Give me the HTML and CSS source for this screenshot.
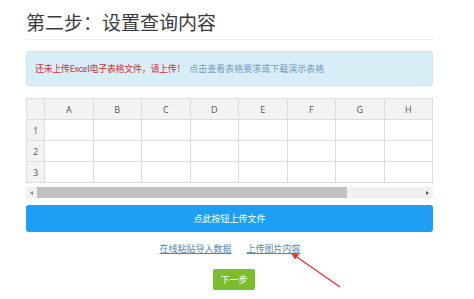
FILE: index.html
```html
<!DOCTYPE html>
<html lang="zh">
<head>
<meta charset="utf-8">
<link rel="stylesheet" href="styles.css">
</head>
<body>
<div class="page">
  <h1 class="title">第二步：设置查询内容</h1>
  <div class="alert">
    <span class="alert-warn">还未上传Excel电子表格文件，请上传！</span>
    <a class="alert-link">点击查看表格要求或下载演示表格</a>
  </div>
  <div class="sheet">
    <div class="grid">
      <div class="cell corner"></div>
      <div class="cell head">A</div><div class="cell head">B</div><div class="cell head">C</div><div class="cell head">D</div>
      <div class="cell head">E</div><div class="cell head">F</div><div class="cell head">G</div><div class="cell head">H</div>
      <div class="cell rowhead">1</div>
      <div class="cell"></div><div class="cell"></div><div class="cell"></div><div class="cell"></div><div class="cell"></div><div class="cell"></div><div class="cell"></div><div class="cell"></div>
      <div class="cell rowhead">2</div>
      <div class="cell"></div><div class="cell"></div><div class="cell"></div><div class="cell"></div><div class="cell"></div><div class="cell"></div><div class="cell"></div><div class="cell"></div>
      <div class="cell rowhead">3</div>
      <div class="cell"></div><div class="cell"></div><div class="cell"></div><div class="cell"></div><div class="cell"></div><div class="cell"></div><div class="cell"></div><div class="cell"></div>
    </div>
    <div class="hscroll">
      <span class="arrow-l"></span>
      <div class="track"><div class="thumb"></div></div>
      <span class="arrow-r"></span>
    </div>
  </div>
  <button class="upload-btn">点此按钮上传文件</button>
  <div class="links">
    <a class="link">在线粘贴导入数据</a>
    <a class="link">上传图片内容</a>
  </div>
  <div class="next-row"><button class="next-btn">下一步</button></div>
</div>
<svg class="annot" width="474" height="299" viewBox="0 0 474 299">
  <line x1="294" y1="255" x2="340" y2="287" stroke="#d9363e" stroke-width="1.4"/>
  <polygon points="291,253 299,254.5 295,259.5" fill="#d9363e"/>
</svg>
</body>
</html>
```
FILE: styles.css
```css
html, body {
  margin: 0;
  padding: 0;
  background: #fff;
}
body {
  font-family: "Noto Sans CJK SC", "Noto Sans", sans-serif;
  position: relative;
  width: 474px;
  height: 299px;
  overflow: hidden;
}
.page {
  width: 407px;
  margin-left: 26px;
  padding-top: 9px;
}
.title {
  margin: 0;
  font-size: 19px;
  font-weight: normal;
  line-height: 26px;
  color: #3a3a3a;
  padding-bottom: 4px;
  border-bottom: 1px solid #eeeeee;
}
.alert {
  margin-top: 11px;
  height: 35px;
  box-sizing: border-box;
  background: #d9edf7;
  border: 1px solid #cfe6f2;
  border-radius: 3px;
  padding: 0 8px;
  display: flex;
  align-items: center;
  font-size: 9px;
  gap: 4px;
}
.alert-warn {
  color: #cc3333;
  letter-spacing: -0.3px;
}
.alert-link {
  color: #6f9cc4;
}
.sheet {
  margin-top: 12px;
}
.grid {
  display: grid;
  grid-template-columns: 18px repeat(8, 1fr);
  grid-auto-rows: 21px;
  border-top: 1px solid #dddddd;
  border-left: 1px solid #dddddd;
}
.cell {
  border-right: 1px solid #dddddd;
  border-bottom: 1px solid #dddddd;
  font-family: "Open Sans", "Liberation Sans", sans-serif;
  font-size: 9px;
  color: #555;
  display: flex;
  align-items: center;
  justify-content: center;
}
.corner, .head, .rowhead {
  background: #f3f3f3;
}
.hscroll {
  margin-top: 4px;
  height: 11px;
  background: #f1f1f1;
  display: flex;
  align-items: center;
}
.arrow-l, .arrow-r {
  width: 11px;
  height: 11px;
  display: flex;
  align-items: center;
  justify-content: center;
}
.arrow-l::before {
  content: "";
  border-top: 2.5px solid transparent;
  border-bottom: 2.5px solid transparent;
  border-right: 3px solid #888;
}
.arrow-r::before {
  content: "";
  border-top: 2.5px solid transparent;
  border-bottom: 2.5px solid transparent;
  border-left: 3px solid #555;
}
.track {
  flex: 1;
  height: 100%;
}
.thumb {
  width: 310px;
  height: 100%;
  background: #c1c1c1;
}
.upload-btn {
  display: block;
  margin-top: 7px;
  width: 100%;
  height: 27px;
  border: none;
  border-radius: 3px;
  background: #1e9ef5;
  color: #fff;
  font-family: "Noto Sans CJK SC", sans-serif;
  font-size: 9px;
  padding: 0;
}
.links {
  margin-top: 10px;
  display: flex;
  justify-content: center;
  gap: 15px;
  font-size: 9px;
  line-height: 14px;
  padding-left: 1px;
}
.link {
  color: #4f8ab6;
  text-decoration: underline;
}
.next-row {
  margin-top: 13px;
  display: flex;
  justify-content: center;
  padding-left: 9px;
}
.next-btn {
  width: 42px;
  height: 21px;
  border: none;
  border-radius: 2px;
  background: #7cbd2b;
  color: #fff;
  font-family: "Noto Sans CJK SC", sans-serif;
  font-size: 9px;
  padding: 0;
}
.annot {
  position: absolute;
  left: 0;
  top: 0;
  pointer-events: none;
}
```
